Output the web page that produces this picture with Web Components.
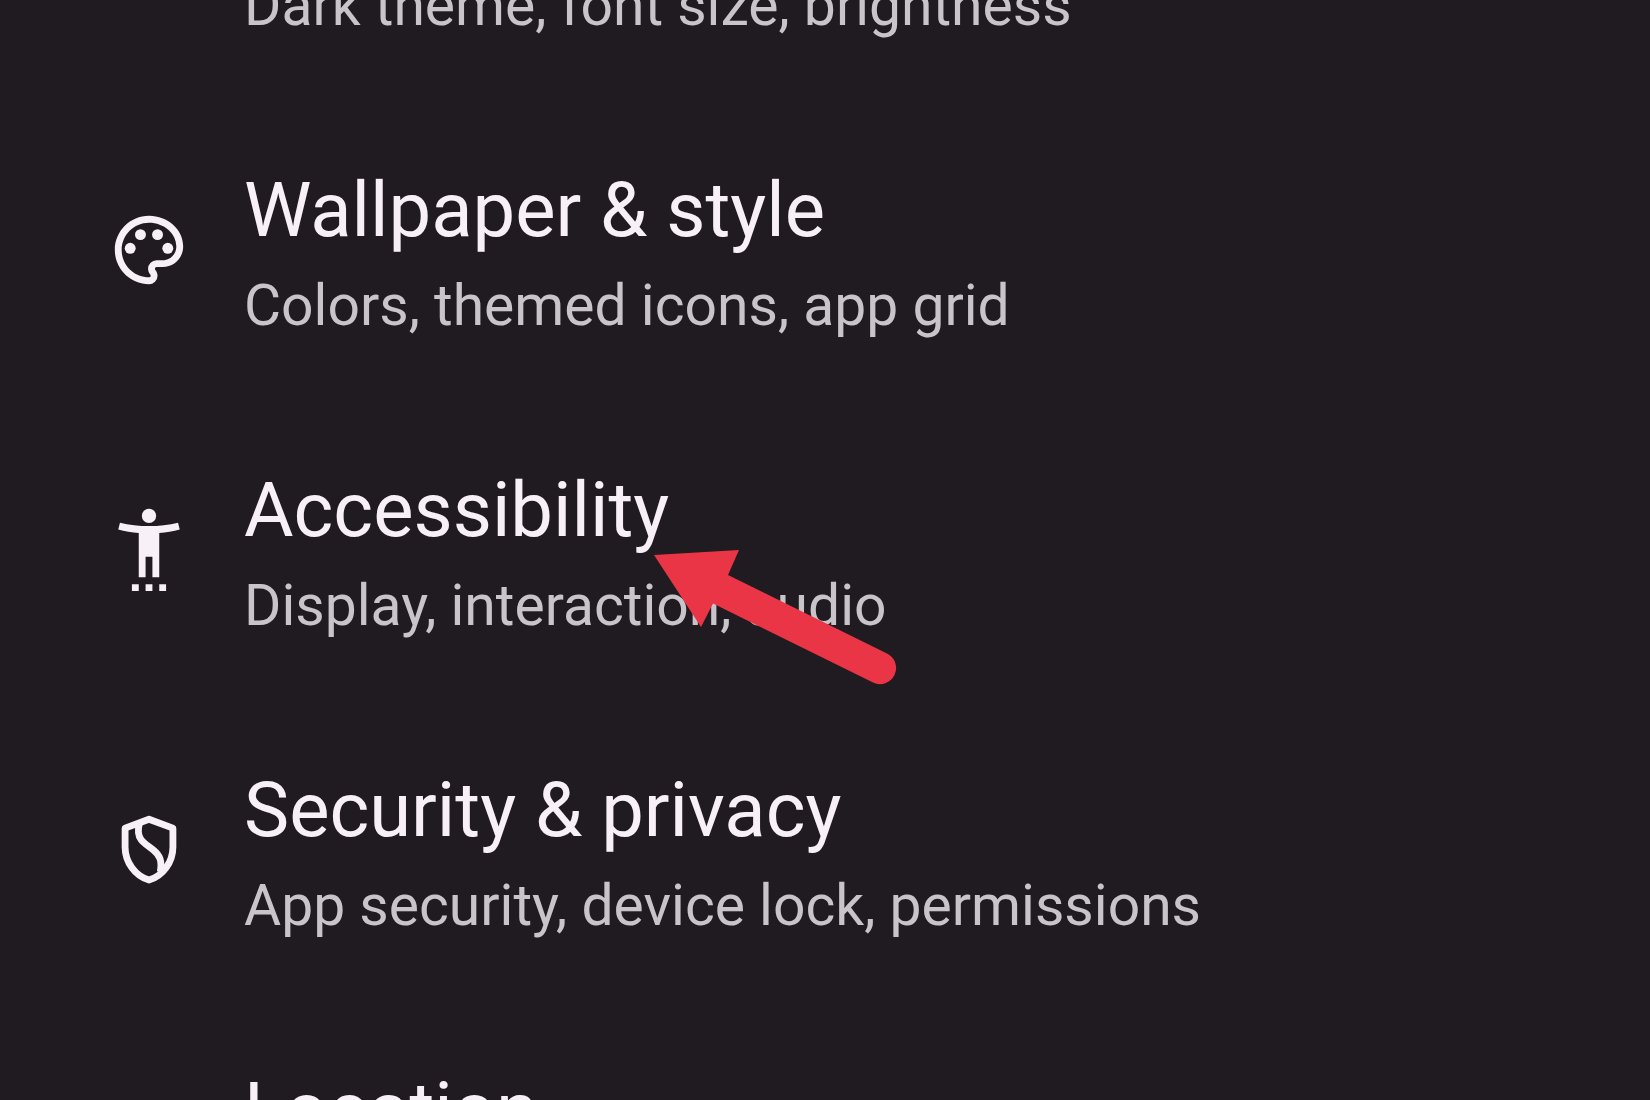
<!DOCTYPE html>
<html lang="en">
<head>
<meta charset="utf-8">
<title>Settings</title>
<style>
  html, body { margin: 0; height: 100%; background: #201b20; }
</style>
</head>
<body>
<settings-list>
  <settings-row class="first">
    <span slot="summary">Dark theme, font size, brightness</span>
  </settings-row>
  <settings-row>
    <settings-icon slot="icon" name="palette"></settings-icon>
    <span slot="title">Wallpaper &amp; style</span>
    <span slot="summary">Colors, themed icons, app grid</span>
  </settings-row>
  <settings-row>
    <settings-icon slot="icon" name="accessibility"></settings-icon>
    <span slot="title">Accessibility</span>
    <span slot="summary">Display, interaction, audio</span>
    <pointer-arrow slot="overlay"></pointer-arrow>
  </settings-row>
  <settings-row>
    <settings-icon slot="icon" name="shield"></settings-icon>
    <span slot="title">Security &amp; privacy</span>
    <span slot="summary">App security, device lock, permissions</span>
  </settings-row>
  <settings-row>
    <span slot="title">Location</span>
  </settings-row>
</settings-list>

<script>
class SettingsList extends HTMLElement {
  constructor() {
    super();
    this.attachShadow({ mode: "open" }).innerHTML = `
      <style>
        :host {
          display: block; height: 100vh; overflow: hidden;
          background: #201b20; color: #f7f0f7;
          font-family: Roboto, "Liberation Sans", sans-serif;
        }
        nav { display: flex; flex-direction: column; }
        ::slotted(.first) { --title-display: none; --row-top: 0px; margin-top: -32px; }
      </style>
      <nav aria-label="Settings"><slot></slot></nav>`;
  }
}

class SettingsRow extends HTMLElement {
  constructor() {
    super();
    this.attachShadow({ mode: "open" }).innerHTML = `
      <style>
        :host { display: block; position: relative; }
        a {
          display: flex; align-items: center; gap: 54px;
          padding: 0 108px; color: inherit; text-decoration: none;
        }
        .icon { flex: 0 0 82px; height: 82px; }
        .text {
          display: flex; flex-direction: column; gap: 10px; flex: 1; min-width: 0;
          padding: var(--row-top, 62px) 0 56px; white-space: nowrap;
        }
        .title { display: var(--title-display, block); font-size: 76px; line-height: 96px; }
        .summary { font-size: 57px; line-height: 76px; min-height: 76px; color: #c9c4ca; }
      </style>
      <a href="#">
        <div class="icon"><slot name="icon"></slot></div>
        <div class="text">
          <div class="title"><slot name="title"></slot></div>
          <div class="summary"><slot name="summary"></slot></div>
        </div>
      </a>
      <slot name="overlay"></slot>`;
  }
}

const ICONS = {
  palette: `
    <path d="M12 22C6.49 22 2 17.51 2 12S6.49 2 12 2s10 4.04 10 9c0 3.31-2.69 6-6 6h-1.77c-.28 0-.5.22-.5.5 0 .12.05.23.13.33.41.47.64 1.06.64 1.67A2.5 2.5 0 0 1 12 22zm0-18c-4.41 0-8 3.59-8 8s3.59 8 8 8c.28 0 .5-.22.5-.5a.54.54 0 0 0-.14-.35c-.41-.46-.63-1.05-.63-1.65a2.5 2.5 0 0 1 2.5-2.5H16c2.21 0 4-1.79 4-4 0-3.86-3.59-7-8-7z"/>
    <circle cx="6.5" cy="11.5" r="1.6"/><circle cx="9.5" cy="7.5" r="1.6"/>
    <circle cx="14.5" cy="7.5" r="1.6"/><circle cx="17.5" cy="11.5" r="1.6"/>`,
  accessibility: `
    <circle cx="12" cy="2" r="2.1"/>
    <path d="M20.5 4c-2.61.7-5.67 1-8.5 1s-5.89-.3-8.5-1L3 6c1.86.5 4 .83 6 1v13h2v-6h2v6h2V7c2-.17 4.14-.5 6-1z"/>
    <path d="M7 22h2v2H7zM11 22h2v2h-2zM15 22h2v2h-2z"/>`,
  shield: `
    <g fill="none" stroke="currentColor" stroke-width="2">
      <path stroke-linejoin="round" d="M12 3 19 5.600v5.500c0 4.500-3 8.500-7 9.700-4-1.200-7-5.200-7-9.700V5.600z"/>
      <path d="M9.200 4.200C8.700 6 8.800 7.800 9.700 9c1 1.300 2.400 2 3.700 3.100 1.700 1.400 2.500 3 1.900 6.300"/>
    </g>`
};

class SettingsIcon extends HTMLElement {
  connectedCallback() {
    if (this.shadowRoot) return;
    this.attachShadow({ mode: "open" }).innerHTML = `
      <style>
        :host { display: block; width: 82px; height: 82px; }
        svg { display: block; width: 100%; height: 100%; fill: currentColor; overflow: visible; }
      </style>
      <svg viewBox="0 0 24 24" aria-hidden="true">${ICONS[this.getAttribute("name")]}</svg>`;
  }
}

class PointerArrow extends HTMLElement {
  constructor() {
    super();
    this.attachShadow({ mode: "open" }).innerHTML = `
      <style>
        :host { display: block; position: absolute; left: 654px; top: 150px; width: 244px; height: 136px; pointer-events: none; }
        svg { display: block; }
      </style>
      <svg width="244" height="136" viewBox="0 0 244 136" aria-hidden="true">
        <path fill="#ea3546" d="M0 5 85 0 74 25 233 103.500A16 16 0 0 1 219 132.500L59 53.500 47 77z"/>
      </svg>`;
  }
}

customElements.define("settings-list", SettingsList);
customElements.define("settings-row", SettingsRow);
customElements.define("settings-icon", SettingsIcon);
customElements.define("pointer-arrow", PointerArrow);
</script>
</body>
</html>
